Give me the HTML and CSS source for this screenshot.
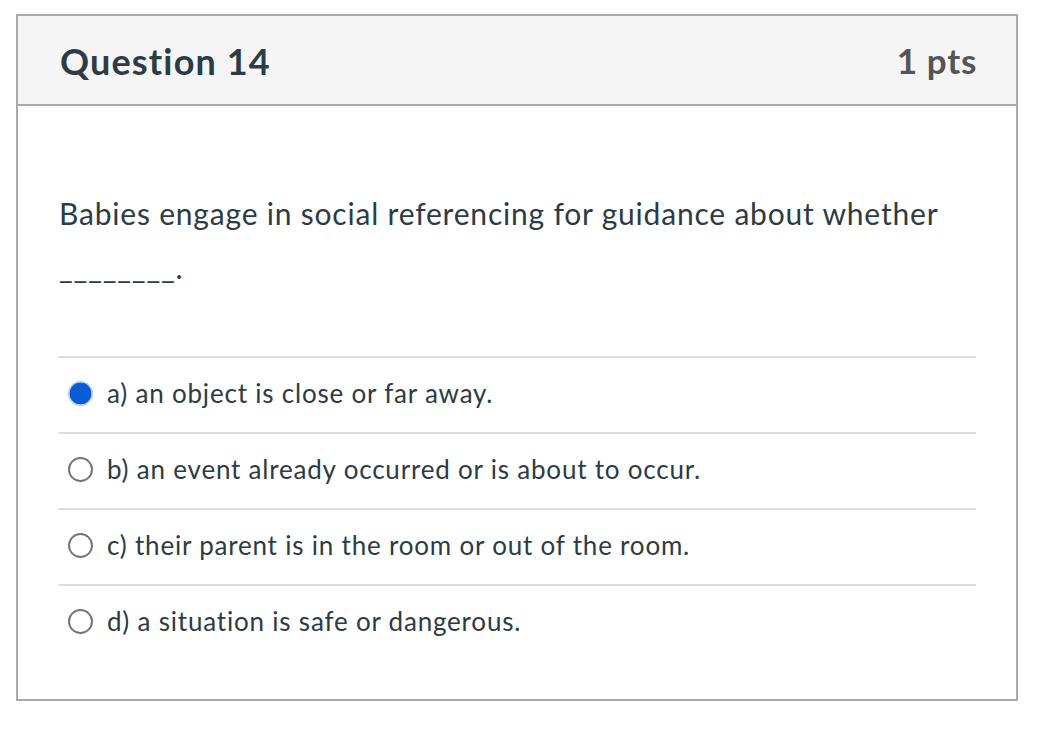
FILE: index.html
```html
<!DOCTYPE html>
<html lang="en">
<head>
<meta charset="utf-8">
<title>Question 14</title>
<link rel="stylesheet" href="styles.css">
</head>
<body>
<div class="page">
  <div class="question">
    <div class="header">
      <h2 class="title">Question 14</h2>
      <span class="points">1 pts</span>
    </div>
    <div class="content">
      <p class="text">Babies engage in social referencing for guidance about whether ________.</p>
      <div class="answers">
        <label class="answer"><span class="radio checked"></span><span class="label">a) an object is close or far away.</span></label>
        <label class="answer"><span class="radio"></span><span class="label">b) an event already occurred or is about to occur.</span></label>
        <label class="answer"><span class="radio"></span><span class="label">c) their parent is in the room or out of the room.</span></label>
        <label class="answer"><span class="radio"></span><span class="label">d) a situation is safe or dangerous.</span></label>
      </div>
    </div>
  </div>
</div>
</body>
</html>
```
FILE: styles.css
```css
* { box-sizing: border-box; }
html, body { margin: 0; padding: 0; background: #fff; }
body { font-family: Lato, "Open Sans", sans-serif; color: #2d3b45; letter-spacing: 0.05em; }
.page { padding: 14px 24px 0 16px; }
.question {
  width: 1002px;
  border: 2px solid #aaaaaa;
  background: #fff;
}
.header {
  height: 90px;
  background: #f5f5f5;
  border-bottom: 2px solid #aaaaaa;
  display: flex;
  align-items: center;
  justify-content: space-between;
  padding: 0 39px 0 42px;
}
.title {
  margin: 0;
  font-size: 36px;
  font-weight: 700;
  color: #2d3b45;
  line-height: 1;
  padding-top: 1px;
  letter-spacing: 0.032em;
}
.points {
  font-size: 35px;
  font-weight: 700;
  color: #555555;
  line-height: 1;
  padding-top: 1px;
  letter-spacing: 0.02em;
}
.content { padding: 80px 40px 39px 40px; }
.text {
  margin: 0 0 62px 1px;
  font-size: 30px;
  line-height: 54px;
}
.answers { display: flex; flex-direction: column; }
.answer {
  display: flex;
  align-items: center;
  height: 76px;
  border-top: 2px solid #dddddd;
  padding: 0 0 3px 10px;
  font-size: 26px;
}
.radio {
  width: 25px;
  height: 25px;
  border-radius: 50%;
  border: 2px solid #767676;
  flex: none;
  margin-right: 14px;
}
.radio.checked {
  border: 1px solid #c3d5f2;
  background: #0a5cd4;
  box-shadow: inset 0 0 0 0.5px #fff;
}
.label { line-height: 1.2; }
```
